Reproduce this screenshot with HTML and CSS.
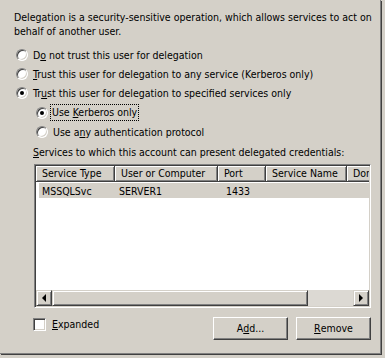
FILE: index.html
```html
<!DOCTYPE html>
<html>
<head>
<meta charset="utf-8">
<link rel="stylesheet" href="styles.css">
</head>
<body>
<div class="page">
  <p class="intro">Delegation is a security-sensitive operation, which allows services to act on behalf of another user.</p>
  <div class="options">
    <div class="opt"><span class="radio"></span><span class="lbl">D<u>o</u> not trust this user for delegation</span></div>
    <div class="opt"><span class="radio"></span><span class="lbl"><u>T</u>rust this user for delegation to any service (Kerberos only)</span></div>
    <div class="opt"><span class="radio on"></span><span class="lbl">Tr<u>u</u>st this user for delegation to specified services only</span></div>
  </div>
  <div class="subopts">
    <div class="opt tall"><span class="radio on"></span><span class="lbl focus">Use <u>K</u>erberos only</span></div>
    <div class="opt"><span class="radio"></span><span class="lbl">Use a<u>n</u>y authentication protocol</span></div>
  </div>
  <div class="svc-label"><u>S</u>ervices to which this account can present delegated credentials:</div>
  <div class="listview">
    <div class="lv-header">
      <div class="hcell c1">Service Type</div>
      <div class="hcell c2">User or Computer</div>
      <div class="hcell c3">Port</div>
      <div class="hcell c4">Service Name</div>
      <div class="hcell c5">Domain</div>
    </div>
    <div class="lv-body">
      <div class="lv-row">
        <span class="cell r1">MSSQLSvc</span>
        <span class="cell r2">SERVER1</span>
        <span class="cell r3">1433</span>
      </div>
    </div>
    <div class="hscroll">
      <div class="sbtn"><span class="arrow-left"></span></div>
      <div class="thumb"></div>
      <div class="track"></div>
      <div class="sbtn"><span class="arrow-right"></span></div>
    </div>
  </div>
  <div class="bottom">
    <div class="chk"><span class="checkbox"></span><span class="lbl"><u>E</u>xpanded</span></div>
    <div class="buttons">
      <div class="btn">A<u>d</u>d...</div>
      <div class="btn"><u>R</u>emove</div>
    </div>
  </div>
</div>
</body>
</html>
```

FILE: styles.css
```css
html, body {
  margin: 0;
  padding: 0;
  background: #d4d0c8;
}
body {
  font-family: "DejaVu Sans Condensed", "DejaVu Sans", sans-serif;
  font-size: 10.5px;
  color: #000;
  width: 385px;
  height: 358px;
  overflow: hidden;
}
.page {
  width: 381px;
  height: 354px;
  border-right: 1px solid #808080;
  border-bottom: 1px solid #808080;
  box-shadow: 1px 1px 0 #404040;
  padding-left: 14px;
  box-sizing: border-box;
  display: flex;
  flex-direction: column;
}
.intro {
  margin: 10px 0 0 0;
  line-height: 14px;
  width: 362px;
}
.options {
  margin-top: 9px;
  display: flex;
  flex-direction: column;
  gap: 3px;
  margin-left: 2px;
}
.opt {
  height: 16px;
  display: flex;
  align-items: center;
}
.opt.tall {
  height: 17px;
}
.opt .lbl {
  margin-left: 5px;
  line-height: 13px;
  white-space: nowrap;
}
.opt .lbl.focus {
  margin-left: 2px;
  padding: 1px;
  border: 1px dotted #000;
}
.subopts {
  margin-top: 3px;
  margin-left: 22px;
  display: flex;
  flex-direction: column;
  gap: 3px;
}
.radio {
  width: 12px;
  height: 12px;
  box-sizing: border-box;
  border-radius: 50%;
  border: 1px solid;
  border-color: #808080 #ffffff #ffffff #808080;
  background: #ffffff;
  box-shadow: inset 1px 1px 0 #404040, inset -1px -1px 0 #d4d0c8;
  flex: none;
  display: flex;
  align-items: center;
  justify-content: center;
}
.radio.on::after {
  content: "";
  width: 4px;
  height: 4px;
  border-radius: 50%;
  background: #000;
}
.svc-label {
  margin-top: 5px;
  margin-left: 19px;
  line-height: 14px;
  white-space: nowrap;
}
.listview {
  margin-top: 5px;
  margin-left: 20px;
  width: 337px;
  height: 144px;
  box-sizing: border-box;
  border: 1px solid;
  border-color: #808080 #ffffff #ffffff #808080;
  box-shadow: inset 1px 1px 0 #404040, inset -1px -1px 0 #d4d0c8;
  padding: 1px;
  background: #ffffff;
  display: flex;
  flex-direction: column;
  overflow: hidden;
}
.lv-header {
  display: flex;
  height: 16px;
  flex: none;
  overflow: hidden;
  white-space: nowrap;
}
.hcell {
  box-sizing: border-box;
  height: 16px;
  line-height: 14px;
  padding-left: 6px;
  background: #d4d0c8;
  border-right: 1px solid #404040;
  border-bottom: 1px solid #404040;
  box-shadow: inset 1px 1px 0 #ffffff, inset -1px -1px 0 #808080;
  flex: none;
  overflow: hidden;
}
.c1 { width: 79px; }
.c2 { width: 103px; }
.c3 { width: 48px; }
.c4 { width: 81px; }
.c5 { width: 60px; }
.lv-body {
  flex: 1;
  background: #ffffff;
  padding-top: 1px;
}
.lv-row {
  margin-left: 3px;
  height: 15px;
  background: #d4d0c8;
  display: flex;
  align-items: center;
  white-space: nowrap;
}
.cell {
  flex: none;
  box-sizing: border-box;
}
.r1 { width: 76px; padding-left: 3px; }
.r2 { width: 103px; padding-left: 4px; }
.r3 { width: 48px; padding-left: 8px; }
.hscroll {
  height: 16px;
  flex: none;
  display: flex;
}
.sbtn {
  width: 16px;
  height: 16px;
  box-sizing: border-box;
  background: #d4d0c8;
  border: 1px solid;
  border-color: #d4d0c8 #404040 #404040 #d4d0c8;
  box-shadow: inset 1px 1px 0 #ffffff, inset -1px -1px 0 #808080;
  display: flex;
  align-items: center;
  justify-content: center;
  flex: none;
}
.arrow-left {
  width: 0;
  height: 0;
  border-top: 4px solid transparent;
  border-bottom: 4px solid transparent;
  border-right: 4px solid #000;
}
.arrow-right {
  width: 0;
  height: 0;
  border-top: 4px solid transparent;
  border-bottom: 4px solid transparent;
  border-left: 4px solid #000;
}
.thumb {
  width: 256px;
  height: 16px;
  box-sizing: border-box;
  background: #d4d0c8;
  border: 1px solid;
  border-color: #d4d0c8 #404040 #404040 #d4d0c8;
  box-shadow: inset 1px 1px 0 #ffffff, inset -1px -1px 0 #808080;
  flex: none;
}
.track {
  flex: 1;
  background: #dcd9d3;
}
.bottom {
  margin-top: 9px;
  margin-left: 19px;
  width: 338px;
  height: 23px;
  display: flex;
  justify-content: space-between;
}
.chk {
  display: flex;
  align-items: center;
  height: 13px;
  margin-top: 1px;
}
.checkbox {
  width: 13px;
  height: 13px;
  box-sizing: border-box;
  border: 1px solid;
  border-color: #808080 #ffffff #ffffff #808080;
  box-shadow: inset 1px 1px 0 #404040, inset -1px -1px 0 #d4d0c8;
  background: #ffffff;
  flex: none;
}
.chk .lbl {
  margin-left: 6px;
  line-height: 13px;
}
.buttons {
  display: flex;
  gap: 8px;
}
.btn {
  width: 75px;
  height: 23px;
  box-sizing: border-box;
  border: 1px solid;
  border-color: #ffffff #404040 #404040 #ffffff;
  box-shadow: inset -1px -1px 0 #808080;
  display: flex;
  align-items: center;
  justify-content: center;
  padding-bottom: 1px;
}
```
